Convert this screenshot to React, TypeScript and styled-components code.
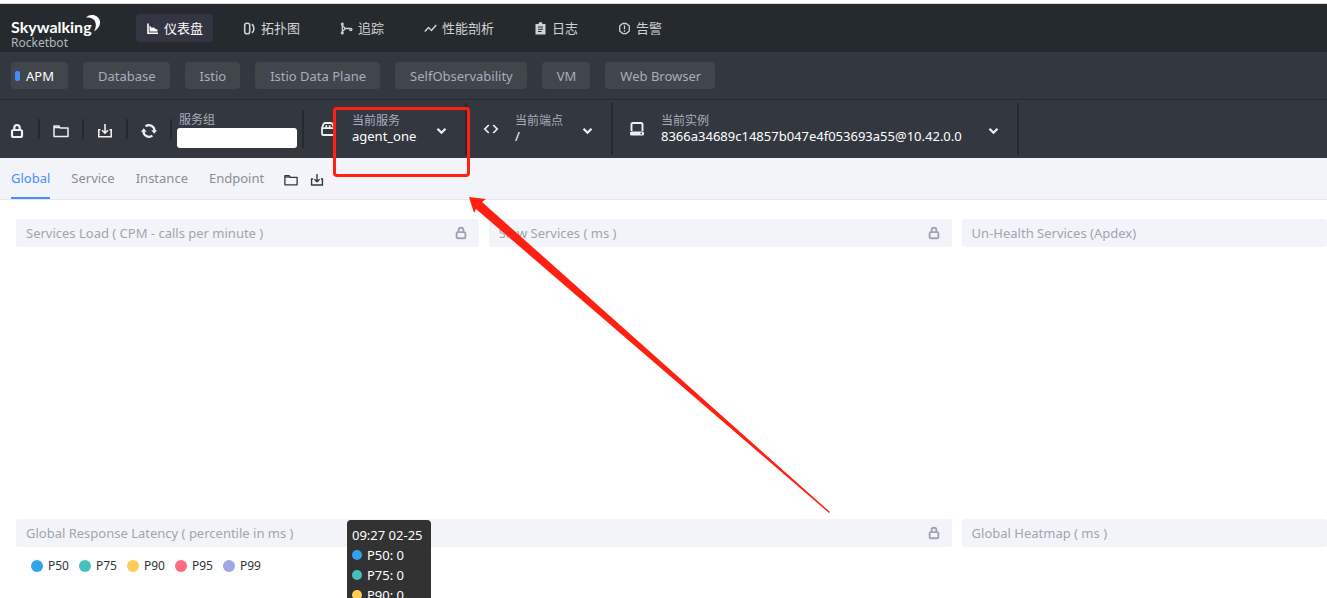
import React from "react";
import styled, { createGlobalStyle } from "styled-components";

const GlobalStyle = createGlobalStyle`
  *, *::before, *::after { box-sizing: border-box; }
  body {
    margin: 0;
    background: #fff;
    font-family: "Noto Sans", "Noto Sans CJK SC", sans-serif;
    font-size: 13px;
    line-height: 20px;
  }
  button, select, input { font: inherit; color: inherit; margin: 0; padding: 0; border: 0; background: none; }
  button { cursor: pointer; }
  svg { display: block; flex: none; }
`;

const Page = styled.div`
  position: relative;
  height: 100vh;
  overflow: hidden;
  padding-top: 3px;
`;

const Header = styled.header`
  display: flex;
  align-items: center;
  height: 49px;
  padding-left: 11px;
  border-top: 1px solid #d5d7da;
  background: #252a2f;
  color: #cfd1d3;
`;

const Brand = styled.a`
  width: 125px;
  padding-top: 8px;
  color: #fff;
  text-decoration: none;
`;

const BrandName = styled.div`
  display: flex;
  height: 21px;
  font: 700 16px/24px Lato, sans-serif;

  svg { margin-left: -6px; }
`;

const BrandSub = styled.div`
  font-size: 12px;
  line-height: 14px;
  color: #b3b8bf;
`;

const MainNav = styled.nav`
  display: flex;
  gap: 20px;
`;

const NavLink = styled.a<{ $active?: boolean }>`
  display: flex;
  align-items: center;
  gap: 5px;
  height: 28px;
  padding: 0 10px;
  border-radius: 4px;
  background: ${(p) => (p.$active ? "#333642" : "transparent")};
  color: ${(p) => (p.$active ? "#fff" : "#cfd1d3")};
  text-decoration: none;
  white-space: nowrap;
`;

const SubNav = styled.nav`
  display: flex;
  align-items: center;
  gap: 15px;
  height: 48px;
  padding-left: 11px;
  border-bottom: 1px solid #252a2f;
  background: #333840;
`;

const Chip = styled.button<{ $active?: boolean }>`
  display: flex;
  align-items: center;
  gap: 6px;
  height: 27px;
  padding: 0 14px 0 ${(p) => (p.$active ? 4 : 15)}px;
  border-radius: 4px;
  background: #41464d;
  color: ${(p) => (p.$active ? "#fff" : "#a7aebb")};
  white-space: nowrap;

  &::before {
    content: "";
    display: ${(p) => (p.$active ? "block" : "none")};
    width: 5px;
    height: 10px;
    border-radius: 2px;
    background: #448dfe;
  }
`;

const Toolbar = styled.div`
  display: flex;
  align-items: center;
  height: 58px;
  background: #333840;
  color: #efefef;
`;

const ToolButton = styled.button`
  height: 20px;
  padding: 3px 13px 0;
  border-right: 2px solid #252a2f;

  &:first-child { padding-left: 9px; }
`;

const Group = styled.div`
  height: 38px;
  padding: 0 5px;
  border-right: 2px solid #252a2f;
`;

const FieldLabel = styled.label`
  display: block;
  font-size: 12px;
  line-height: 14px;
  color: #a7aebb;
`;

const GroupLabel = styled(FieldLabel)`
  height: 18px;
  padding-left: 2px;
  line-height: 20px;
`;

const GroupInput = styled.input`
  display: block;
  width: 120px;
  height: 20px;
  border-radius: 3px;
  background: #fff;
  color: #333840;
`;

const Selector = styled.div`
  display: flex;
  align-items: center;
  height: 52px;
  padding: 0 18px 0 16px;
  border-right: 2px solid #252a2f;
`;

const SelectorField = styled.div<{ $minWidth: number }>`
  min-width: ${(p) => p.$minWidth}px;
  margin: 0 18px 0 16px;
`;

const ValueSelect = styled.select`
  display: block;
  appearance: none;
  width: 100%;
  height: 16px;
  line-height: 16px;
  color: #fff;
`;

const Chevron = styled.svg`
  margin-top: 3px;
`;

const Tabs = styled.div`
  display: flex;
  align-items: center;
  height: 42px;
  padding-left: 11px;
  border-bottom: 1px solid #e6e8ec;
  background: #f3f4f9;
  color: #333840;
`;

const TabList = styled.div`
  display: flex;
  gap: 21px;
  height: 41px;
  margin-right: 20px;
`;

const Tab = styled.button<{ $active?: boolean }>`
  border-bottom: 2px solid ${(p) => (p.$active ? "#448dfe" : "transparent")};
  color: ${(p) => (p.$active ? "#448dfe" : "#888d96")};
`;

const TabAction = styled.button`
  margin-right: 12px;
  padding-top: 2px;
`;

const Board = styled.main`
  display: grid;
  grid-template-columns: 38fr 38fr 30fr;
  grid-auto-rows: 290px;
  gap: 10px;
  padding: 19px 0 0 16px;
`;

const Card = styled.section<{ $wide?: boolean }>`
  position: relative;
  min-width: 0;
  grid-column: span ${(p) => (p.$wide ? 2 : 1)};
`;

const CardHead = styled.header`
  display: flex;
  align-items: center;
  justify-content: space-between;
  height: 28px;
  padding: 0 11px 0 10px;
  border-radius: 3px;
  background: #f3f4f9;
  color: #9da5b2;
`;

const CardTitle = styled.h2`
  margin: 0;
  font-size: 13px;
  font-weight: 400;
  white-space: nowrap;
`;

const Legend = styled.ul`
  display: flex;
  gap: 10px;
  margin: 0;
  padding: 9px 15px;
  list-style: none;
  font-size: 12px;
  color: #333;
`;

const Series = styled.li`
  display: flex;
  align-items: center;
  gap: 5px;
`;

const Dot = styled.span<{ $color: string; $size: number }>`
  width: ${(p) => p.$size}px;
  height: ${(p) => p.$size}px;
  border-radius: 50%;
  background: ${(p) => p.$color};
`;

const Tooltip = styled.div`
  position: absolute;
  top: 1px;
  left: 331px;
  min-width: 84px;
  padding: 5px;
  border-radius: 4px;
  background: #323232;
  color: #fff;
  white-space: nowrap;
`;

const Highlight = styled.div`
  position: absolute;
  top: 107px;
  left: 333px;
  width: 137px;
  height: 70px;
  border: 3px solid #ff2011;
  border-radius: 4px;
  pointer-events: none;
`;

const Arrow = styled.svg`
  position: absolute;
  top: 197px;
  left: 469px;
  pointer-events: none;
`;

const stroke = { fill: "none", stroke: "currentColor" } as const;

type IconProps = { size?: number };

const LockIcon = ({ size = 16 }: IconProps) => (
  <svg width={size} height={size} viewBox="0 0 16 16" {...stroke} strokeWidth="2.2">
    <rect x="3" y="7" width="10" height="7" rx="1.5" />
    <path d="M5.3 7V4.7a2.7 2.7 0 0 1 5.4 0V7" />
  </svg>
);

const FolderIcon = ({ size = 16 }: IconProps) => (
  <svg width={size} height={size} viewBox="0 0 16 16" {...stroke} strokeWidth="1.5">
    <path d="M1 13.500V3h4.800l1.400 1.900H15v8.600z" strokeLinejoin="round" />
    <path d="M1 4.500h6" />
  </svg>
);

const DownloadIcon = ({ size = 16 }: IconProps) => (
  <svg width={size} height={size} viewBox="0 0 16 16" {...stroke} strokeWidth="1.6">
    <path d="M3.500 6.800H1.800v6.900h12.400V6.800h-1.700M8 1v8.800M5.100 7.200 8 10.100l2.900-2.900" />
  </svg>
);

const RefreshIcon = () => (
  <svg width="16" height="16" viewBox="0 0 16 16">
    <g {...stroke} strokeWidth="2.2">
      <path d="M2.600 7.500A5.500 5.500 0 0 0 11.400 12.600" />
      <path d="M13.400 8.500A5.500 5.500 0 0 0 4.600 3.400" />
    </g>
    <path d="M0 8.800 2.700 5.200l3 3.600zM10.300 7.200H16l-2.800 3.600z" fill="currentColor" />
  </svg>
);

const ChevronIcon = () => (
  <Chevron width="11" height="8" viewBox="0 0 11 8" {...stroke} strokeWidth="2.2">
    <path d="m1.500 1.800 4 4 4-4" />
  </Chevron>
);

const ServiceIcon = () => (
  <svg width="16" height="16" viewBox="0 0 16 16" {...stroke} strokeWidth="1.8">
    <path
      d="M2 7 3.500 3.200q.4-1.200 1.500-1.200h6q1.100 0 1.500 1.200L14 7v5.700q0 1.300-1.300 1.300H3.300Q2 14 2 12.700z"
      strokeLinejoin="round"
    />
    <path d="M2 7.200h12M6.300 4.200v2.600M9.700 4.200v2.600" />
  </svg>
);

const CodeIcon = () => (
  <svg width="16" height="16" viewBox="0 0 16 16" {...stroke} strokeWidth="1.7">
    <path d="M5.800 4 1.800 8l4 4M10.200 4l4 4-4 4" />
  </svg>
);

const InstanceIcon = () => (
  <svg width="16" height="16" viewBox="0 0 16 16">
    <path d="M2.500 10V3.600Q2.500 2 4 2h8q1.500 0 1.500 1.600V10" {...stroke} strokeWidth="1.900" />
    <path
      d="M2.500 10.500h11a1.500 1.500 0 0 1 1.500 1.500v1a1.500 1.500 0 0 1-1.500 1.500h-11A1.500 1.500 0 0 1 1 13v-1a1.500 1.500 0 0 1 1.500-1.500zM11.500 11.800v1.400H13v-1.400z"
      fill="currentColor"
      fillRule="evenodd"
    />
  </svg>
);

const NavGlyph = ({ children }: { children: React.ReactNode }) => (
  <svg width="13" height="13" viewBox="0 0 13 13" {...stroke} strokeWidth="1.300">
    {children}
  </svg>
);

const navItems = [
  {
    label: "仪表盘",
    glyph: (
      <>
        <path d="M2 1.500v9.700h10" strokeWidth="1.600" />
        <path d="M3.500 9.500V3.500l2.300 2.200L8 5.500l1.500 1.500 2 .5v2z" fill="currentColor" stroke="none" />
      </>
    ),
  },
  {
    label: "拓扑图",
    glyph: (
      <>
        <rect x="1.700" y="1.300" width="5" height="10.400" rx="2" strokeWidth="1.600" />
        <path d="M8.800 2.300c2.700 1.200 2.700 7.200 0 8.400" strokeWidth="1.500" />
      </>
    ),
  },
  {
    label: "追踪",
    glyph: (
      <>
        <path d="M2.300 2.500v8.500M2.300 9.500 5.500 6.500H10M2.300 3.500l3.200 3" />
        <circle cx="2.300" cy="2" r=".9" />
        <circle cx="2.300" cy="11" r=".9" />
        <circle cx="10.800" cy="7.500" r="1.100" />
      </>
    ),
  },
  { label: "性能剖析", glyph: <path d="M.8 9.500 4.500 5.500l3 3L12.200 3" strokeWidth="1.500" /> },
  {
    label: "日志",
    glyph: (
      <path
        d="M1.500 2h3a2 2 0 0 1 4 0h3v10.500h-10zM4 4.500v1h5v-1zM4 6.700v1h5v-1zM4 8.900v1h3.500v-1z"
        fill="currentColor"
        fillRule="evenodd"
        stroke="none"
      />
    ),
  },
  {
    label: "告警",
    glyph: (
      <>
        <path d="M4.700 1.500h3.600L11.300 4v5L8.300 11.600H4.700L1.700 9V4z" strokeLinejoin="round" />
        <path d="M6.500 3.500v3.800M6.500 8.300v1.400" />
      </>
    ),
  },
];

const chips = ["APM", "Database", "Istio", "Istio Data Plane", "SelfObservability", "VM", "Web Browser"];

const selectors = [
  { id: "service", label: "当前服务", value: "agent_one", minWidth: 66, icon: <ServiceIcon /> },
  { id: "endpoint", label: "当前端点", value: "/", minWidth: 49, icon: <CodeIcon /> },
  {
    id: "instance",
    label: "当前实例",
    value: "8366a34689c14857b047e4f053693a55@10.42.0.0",
    minWidth: 309,
    icon: <InstanceIcon />,
  },
];

const tools = [
  { label: "Lock", icon: <LockIcon /> },
  { label: "Import", icon: <FolderIcon /> },
  { label: "Export", icon: <DownloadIcon /> },
  { label: "Refresh", icon: <RefreshIcon /> },
];

const tabs = ["Global", "Service", "Instance", "Endpoint"];

const series = [
  { name: "P50", color: "#30a4eb" },
  { name: "P75", color: "#45bfc0" },
  { name: "P90", color: "#ffcc55" },
  { name: "P95", color: "#ff6a84" },
  { name: "P99", color: "#a0a7e6" },
];

type PanelProps = { title: string; wide?: boolean; locked?: boolean; children?: React.ReactNode };

const Panel = ({ title, wide, locked, children }: PanelProps) => (
  <Card $wide={wide}>
    <CardHead>
      <CardTitle>{title}</CardTitle>
      {locked && (
        <button aria-label={`Edit ${title}`}>
          <LockIcon size={14} />
        </button>
      )}
    </CardHead>
    {children}
  </Card>
);

export default function App() {
  return (
    <Page>
      <GlobalStyle />
      <Header>
        <Brand href="#">
          <BrandName>
            Skywalking
            <svg width="15" height="17" viewBox="0 0 15 17">
              <path d="M0 2.500C3-.5 8-.8 11.500 2 16 6 14.500 13 8 16.500 10.500 12 10.500 7 7.500 4.500 5.500 2.800 3 2.300 0 2.500z" fill="#fff" />
            </svg>
          </BrandName>
          <BrandSub>Rocketbot</BrandSub>
        </Brand>
        <MainNav>
          {navItems.map((item, i) => (
            <NavLink key={item.label} href="#" $active={i === 0}>
              <NavGlyph>{item.glyph}</NavGlyph>
              {item.label}
            </NavLink>
          ))}
        </MainNav>
      </Header>

      <SubNav>
        {chips.map((name, i) => (
          <Chip key={name} $active={i === 0}>
            {name}
          </Chip>
        ))}
      </SubNav>

      <Toolbar>
        {tools.map((tool) => (
          <ToolButton key={tool.label} aria-label={tool.label}>
            {tool.icon}
          </ToolButton>
        ))}
        <Group>
          <GroupLabel htmlFor="group">服务组</GroupLabel>
          <GroupInput id="group" type="text" />
        </Group>
        {selectors.map((s) => (
          <Selector key={s.id}>
            {s.icon}
            <SelectorField $minWidth={s.minWidth}>
              <FieldLabel htmlFor={s.id}>{s.label}</FieldLabel>
              <ValueSelect id={s.id}>
                <option>{s.value}</option>
              </ValueSelect>
            </SelectorField>
            <ChevronIcon />
          </Selector>
        ))}
      </Toolbar>

      <Tabs>
        <TabList role="tablist">
          {tabs.map((name, i) => (
            <Tab key={name} role="tab" aria-selected={i === 0} $active={i === 0}>
              {name}
            </Tab>
          ))}
        </TabList>
        <TabAction aria-label="Import template">
          <FolderIcon size={14} />
        </TabAction>
        <TabAction aria-label="Export template">
          <DownloadIcon size={14} />
        </TabAction>
      </Tabs>

      <Board>
        <Panel title="Services Load ( CPM - calls per minute )" locked />
        <Panel title="Slow Services ( ms )" locked />
        <Panel title="Un-Health Services (Apdex)" />
        <Panel title="Global Response Latency ( percentile in ms )" wide locked>
          <Legend>
            {series.map((s) => (
              <Series key={s.name}>
                <Dot $color={s.color} $size={12} />
                {s.name}
              </Series>
            ))}
          </Legend>
          <Tooltip>
            09:27 02-25
            {series.slice(0, 3).map((s) => (
              <Series as="div" key={s.name}>
                <Dot $color={s.color} $size={10} />
                {s.name}: 0
              </Series>
            ))}
          </Tooltip>
        </Panel>
        <Panel title="Global Heatmap ( ms )" />
      </Board>

      <Highlight />
      <Arrow width="362" height="317" viewBox="0 0 362 317">
        <path d="M0 0 17 2l-4 3L361 315l-1 1L7 12l-2 4z" fill="#ff2011" />
      </Arrow>
    </Page>
  );
}
